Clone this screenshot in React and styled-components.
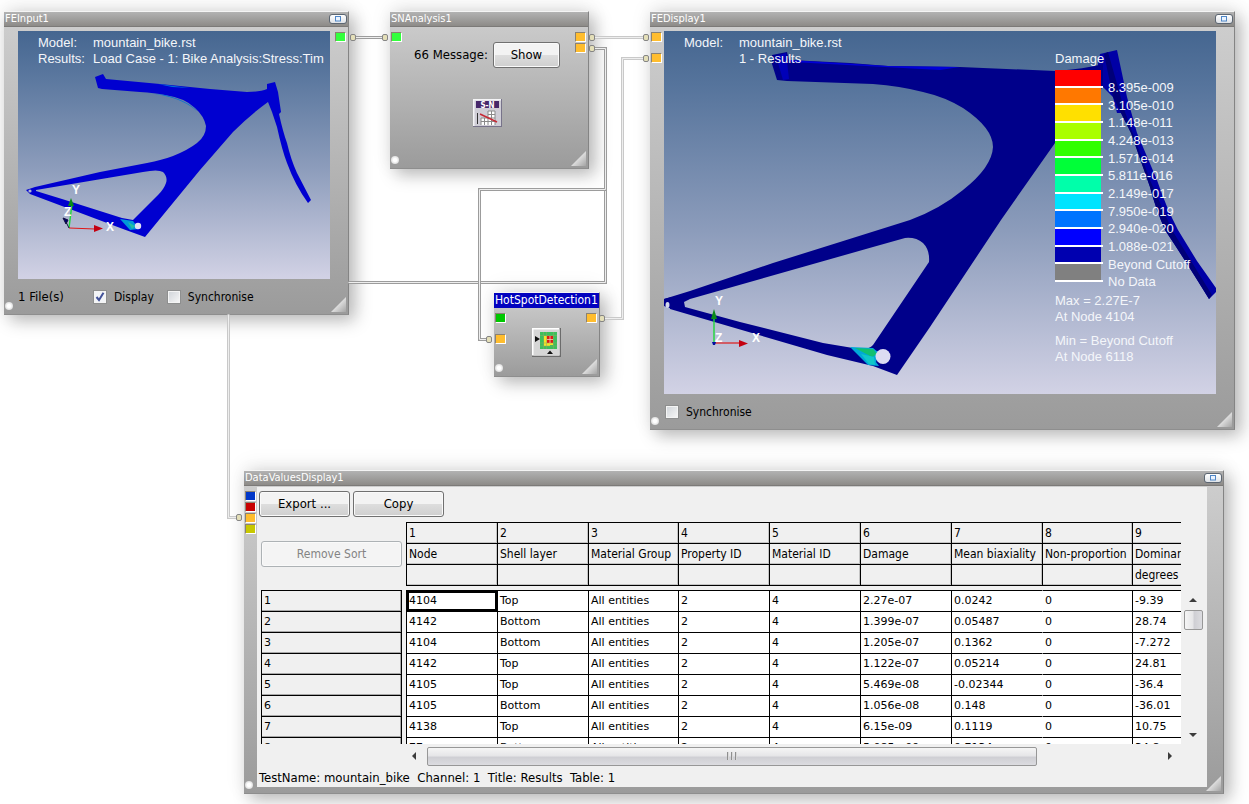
import styled, { createGlobalStyle } from "styled-components"

const GlobalStyle = createGlobalStyle`
  * { box-sizing: border-box; }
  body {
    margin: 0;
    background: #fff;
    color: #000;
    font-family: "DejaVu Sans Condensed", "DejaVu Sans", sans-serif;
    font-size: 13px;
    line-height: 16px;
  }
`

const Canvas = styled.main`
  position: relative;
  min-height: 100vh;
  overflow: hidden;
`

const Wires = styled.svg`
  position: absolute;
  left: 0;
  top: 0;
  overflow: visible;
`

const Node = styled.section`
  position: absolute;
  left: ${p => p.$x}px;
  top: ${p => p.$y}px;
  width: ${p => p.$w}px;
  display: flex;
  flex-direction: column;
  background: linear-gradient(#cfcfcf, #9b9b9b);
  border-top: 1px solid #f4f4f4;
  border-right: 1px solid #848484;
  border-bottom: 1px solid #8e8e8e;
  box-shadow: 6px 6px 16px rgba(0, 0, 0, 0.26), 0 -4px 20px rgba(0, 0, 0, 0.08);
`

const TitleBar = styled.header`
  display: flex;
  align-items: center;
  justify-content: space-between;
  height: 15px;
  padding: 0 1px;
  overflow: hidden;
  white-space: nowrap;
  color: #fff;
  background: ${p => p.$selected ? "#0202bf" : "linear-gradient(#b2b2b2, #8d8b88)"};
  border-bottom: 1px solid ${p => p.$selected ? "#0202bf" : "#7c7a78"};
  h2 {
    margin: 0;
    font-size: ${p => p.$selected ? 12 : 11}px;
    line-height: 14px;
    font-weight: normal;
  }
`

const RestoreButton = styled.button`
  display: flex;
  align-items: center;
  justify-content: center;
  flex: none;
  width: 18px;
  height: 10px;
  padding: 0;
  border: 1px solid #5c6672;
  border-radius: 3px;
  background: linear-gradient(#fff, #dfe3e8);
`

const Body = styled.div`
  display: grid;
  grid-template-columns: ${p => p.$cols};
  flex: 1;
`

const Ports = styled.div`
  display: flex;
  flex-direction: column;
  align-items: ${p => p.$right ? "flex-end" : "flex-start"};
  gap: ${p => p.$gap || 0}px;
  padding: 5px ${p => p.$right ? 2 : 0}px 0 1px;
`

const Port = styled.i`
  width: 11px;
  height: 10px;
  background: ${p => p.$color};
  border: 1px solid #fff;
  border-top-color: #8b8272;
  border-left-color: #8b8272;
`

const Dot = styled.i`
  position: absolute;
  left: 1px;
  bottom: 4px;
  width: 8px;
  height: 8px;
  border-radius: 50%;
  background: radial-gradient(#fff 30%, #c4c4c4);
`

const Grip = styled.i`
  position: absolute;
  right: 2px;
  bottom: 2px;
  width: 15px;
  height: 15px;
  clip-path: polygon(100% 0, 100% 100%, 0 100%);
  background: linear-gradient(135deg, #dedede 50%, #a4a4a4);
`

const Button = styled.button`
  width: ${p => p.$w}px;
  height: 26px;
  padding: 0;
  font: inherit;
  color: #000;
  border: 1px solid #707070;
  border-radius: 3px;
  background: linear-gradient(#f3f3f3 48%, #dddddd 52%, #cfcfcf);
  box-shadow: inset 0 0 0 1px #fafafa;
  &:disabled {
    color: #838383;
    border-color: #adb2b5;
    background: #f4f4f4;
  }
`

const CheckLabel = styled.label`
  display: flex;
  align-items: center;
  gap: 7px;
  font-size: 12px;
  input {
    appearance: none;
    width: 14px;
    height: 14px;
    margin: 0;
    border: 1px solid #8e8f8f;
    outline: 1px solid #f4f4f4;
    outline-offset: -2px;
    background: linear-gradient(135deg, #cfd3d8, #f8f8f8);
  }
  input:checked {
    background: url("data:image/svg+xml,%3Csvg xmlns='http://www.w3.org/2000/svg' viewBox='0 0 12 12'%3E%3Cpath d='M2.5 6 L5 9 L9.5 1.8' fill='none' stroke='%23425299' stroke-width='2'/%3E%3C/svg%3E"), #f2f4f7;
  }
`

const Footer = styled.div`
  display: flex;
  align-items: center;
  height: 35px;
  padding-left: ${p => p.$indent || 0}px;
  > span { width: 75px; }
  label + label { margin-left: 13px; }
`

const Viewport = styled.div`
  position: relative;
  height: ${p => p.$h}px;
  margin-top: 4px;
  overflow: hidden;
  color: #f4f6fa;
  font-family: "Liberation Sans", sans-serif;
  font-size: 13px;
  background: linear-gradient(#456690, #56749c 15%, #8c9cbb 55%, #d2d2e5);
  > svg {
    position: absolute;
    inset: 0;
    width: 100%;
    height: 100%;
  }
`

const Caption = styled.dl`
  position: relative;
  display: grid;
  grid-template-columns: 55px 1fr;
  margin: 0;
  padding: 4px 0 0 20px;
  white-space: nowrap;
  dt, dd { margin: 0; height: 16px; }
`

const Legend = styled.div`
  position: absolute;
  right: 0;
  top: 20px;
  width: 161px;
  > div { display: flex; height: 212px; margin-top: 3px; }
  p { margin: 0; }
  div + p { margin-top: 11px; }
  p + p { margin-top: 8px; }
`

const Swatches = styled.div`
  display: flex;
  flex-direction: column;
  width: 48px;
  i {
    flex: 1;
    border-bottom: 2px solid #fff;
  }
`

const Swatch = styled.i`
  background: linear-gradient(90deg, ${p => p.$color} 46px, transparent 46px);
`

const Labels = styled.div`
  display: flex;
  flex-direction: column;
  margin-left: 5px;
  padding-top: 10px;
  height: 222px;
  span { flex: 1; }
`

const AnalysisPane = styled.div`
  display: flex;
  flex-direction: column;
  align-items: center;
  padding-top: 15px;
  gap: 31px;
  height: 141px;
  p { display: flex; align-items: center; gap: 5px; margin: 0; white-space: nowrap; }
`

const HotPane = styled.div`
  display: flex;
  justify-content: center;
  align-items: flex-start;
  height: 68px;
  padding-top: 20px;
`

const DataPane = styled.div`
  height: 300px;
  margin: 1px 0 6px;
  padding: 4px 0 0 2px;
  background: #f0f0f0;
  min-width: 0;
`

const Toolbar = styled.div`
  display: flex;
  gap: 3px;
`

const GridArea = styled.div`
  display: grid;
  grid-template-columns: 1fr 26px;
  margin: 5px 0 0 2px;
`

const TableClip = styled.div`
  height: 222px;
  overflow: hidden;
`

// cells draw their top and left edges, the next cell closes them
const Table = styled.table`
  width: 960px;
  table-layout: fixed;
  border-collapse: separate;
  border-spacing: 0;
  font-size: 12px;
  th, td {
    height: 21px;
    padding: 0 2px;
    text-align: left;
    font-weight: normal;
    white-space: nowrap;
    line-height: 16px;
    border-top: 1px solid #000;
    border-left: 1px solid #000;
  }
  thead th { box-shadow: inset -1px -1px 0 #c4c4c4; }
  thead tr:last-child th { height: 22px; border-bottom: 1px solid #000; }
  thead th[rowspan] {
    border: none;
    box-shadow: none;
    padding: 0;
  }
  tbody { font-family: "DejaVu Sans", sans-serif; font-size: 11px; }
  tbody td { background: #fff; }
  tbody td:nth-child(9) { border-left-color: #fff; }
  tbody tr:nth-child(2) td:nth-child(2) { box-shadow: inset 0 0 0 2px #000; }
`

const SpacerRow = styled.tr`
  && td {
    height: 4px;
    padding: 0;
    border: none;
    background: #f0f0f0;
  }
`

const RowHead = styled.th`
  && { padding: 0 4px 0 0; border: none; }
  span {
    display: block;
    height: 21px;
    padding: 2px 2px 0;
    border: 1px solid #000;
    border-bottom: none;
    box-shadow: inset -1px -1px 0 #a8a8a8;
  }
`

const VScroll = styled.div`
  display: flex;
  flex-direction: column;
  align-items: center;
  gap: 5px;
  width: 20px;
  height: 145px;
  margin: 73px 0 0 2px;
  svg:last-child { margin-top: auto; }
`

const Thumb = styled.i`
  display: flex;
  align-items: center;
  justify-content: center;
  gap: 2px;
  width: ${p => p.$w}px;
  height: ${p => p.$h}px;
  border: 1px solid #979797;
  border-radius: 2px;
  background: linear-gradient(${p => p.$dir}, #f5f5f5, #e6e6e8 45%, #cfcfd4 55%, #dcdce0);
  b { width: 2px; height: 8px; background: linear-gradient(90deg, #6a6a6a, #fff); }
`

const HScroll = styled.div`
  display: flex;
  align-items: center;
  gap: 8px;
  height: 20px;
  margin: 2px 32px 0 150px;
  svg:last-child { margin-left: auto; }
`

const Status = styled.p`
  margin: 4px 0 0;
  white-space: pre;
`

const ORANGE = "#ffbd2e"
const GREEN = "#33ff3d"
const PALE = "#c9c9c9"
const DARK = "#9c9c9c"

const wires = [
  ["M353 37H385", DARK],
  ["M605 48V189V282H348", DARK],
  ["M593 48H605V189H479V339H489", DARK],
  ["M593 37H645", PALE],
  ["M602 318H622V58H645", PALE],
  ["M228 314V517H239", PALE],
]
const plugs = [[353, 37], [385, 37], [592, 37], [592, 48], [646, 37], [646, 58], [489, 339], [602, 318], [239, 517]]

const legend = [
  ["#ff0000", "8.395e-009"],
  ["#ff7800", "3.105e-010"],
  ["#ffe000", "1.148e-011"],
  ["#aaff00", "4.248e-013"],
  ["#30ff00", "1.571e-014"],
  ["#00ff38", "5.811e-016"],
  ["#00ffaa", "2.149e-017"],
  ["#00e4ff", "7.950e-019"],
  ["#0074ff", "2.940e-020"],
  ["#0000ff", "1.088e-021"],
  ["#0000b0", "Beyond Cutoff"],
  ["#808080", "No Data"],
]

const columns = [
  ["Node", ""],
  ["Shell layer", ""],
  ["Material Group", ""],
  ["Property ID", ""],
  ["Material ID", ""],
  ["Damage", ""],
  ["Mean biaxiality", ""],
  ["Non-proportion", ""],
  ["Dominant", "degrees"],
]

const rows = [
  ["4104", "Top", "All entities", "2", "4", "2.27e-07", "0.0242", "0", "-9.39"],
  ["4142", "Bottom", "All entities", "2", "4", "1.399e-07", "0.05487", "0", "28.74"],
  ["4104", "Bottom", "All entities", "2", "4", "1.205e-07", "0.1362", "0", "-7.272"],
  ["4142", "Top", "All entities", "2", "4", "1.122e-07", "0.05214", "0", "24.81"],
  ["4105", "Top", "All entities", "2", "4", "5.469e-08", "-0.02344", "0", "-36.4"],
  ["4105", "Bottom", "All entities", "2", "4", "1.056e-08", "0.148", "0", "-36.01"],
  ["4138", "Top", "All entities", "2", "4", "6.15e-09", "0.1119", "0", "10.75"],
  ["77", "Bottom", "All entities", "2", "4", "5.085e-09", "0.7134", "0", "34.8"],
]

function Arrow({ d }) {
  return (
    <svg width="10" height="10" viewBox="0 0 10 10" aria-hidden="true">
      <path d={d} fill="#3c3c3c" />
    </svg>
  )
}

function Title({ children, selected, restore }) {
  return (
    <TitleBar $selected={selected}>
      <h2>{children}</h2>
      {restore && (
        <RestoreButton type="button" aria-label="Restore">
          <svg width="8" height="6" viewBox="0 0 8 6">
            <rect x="1.5" y="0.5" width="5" height="4.5" fill="#eaf3ff" stroke="#4f86c6" />
          </svg>
        </RestoreButton>
      )}
    </TitleBar>
  )
}

function Axes({ x, y, flat }) {
  return (
    <g transform={`translate(${x} ${y})`}>
      <path d={flat ? "M0 0V-28" : "M0 0L3 -24"} stroke="#1fd83a" strokeWidth="1.4" />
      <path d={flat ? "M-3 -24L0 -34L3 -24Z" : "M-1 -22L2 -30L5 -22Z"} fill="#0a8a1a" />
      <path d={flat ? "M0 0H26" : "M0 0L26 1"} stroke="#e01818" strokeWidth="1.2" />
      <path d="M25 -3L34 0.5L25 4Z" fill="#c40010" />
      {flat
        ? <path d="M-2 -1H2L1 2H-1Z" fill="#0010a0" />
        : <path d="M-6 -10L-1 -8L-3 -4ZM0 0L-3 -6" fill="#00006a" stroke="#101040" />}
      <g fill="#fff" fontWeight="bold" fontSize="12">
        <text x={flat ? 1 : 3} y={flat ? -38 : -34}>Y</text>
        <text x={flat ? 1 : -5} y={flat ? -1 : -12}>Z</text>
        <text x={flat ? 38 : 37} y={flat ? -1 : 3}>X</text>
      </g>
    </g>
  )
}

function SmallBike() {
  return (
    <svg viewBox="18 31 312 248" preserveAspectRatio="xMinYMin slice" aria-hidden="true">
      <path
        fillRule="evenodd"
        fill="#0000d0"
        d="M95 77L103 74L106 79L160 84L210 89L247 92Q260 92 267 89L267 84L275 82L278 92L281 112L279 114Q283 132 287 143Q291 160 297 173L311 200L308 203Q295 185 287 163Q282 150 277 127L272 112L268 102Q250 115 233 132L200 170L145 237L123 229L30 194L26 190L35 187L100 172L147 163Q162 160 173 156Q188 150 197 143Q206 136 206 126Q204 116 195 108Q185 98 165 95Q155 93 140 92L102 89L98 88Z
           M36 190L143 172Q158 169 163 172Q168 177 166 183Q164 189 158 195L133 220L122 218L62 199L36 191Z"
      />
      <path d="M147 93Q180 96 197 111Q188 101 165 95ZM158 84L190 88L172 87Z" fill="#0070d8" />
      <path d="M120 219L133 221L139 229L130 230Z" fill="#0098d8" />
      <path d="M128 222L135 226L132 229Z" fill="#20c0a0" />
      <circle cx="138" cy="226" r="3.2" fill="#e0e2f4" />
      <circle cx="30" cy="191" r="1.6" fill="#b0b6d0" />
      <Axes x={69} y={228} />
    </svg>
  )
}

function LargeBike() {
  return (
    <svg viewBox="664 31 552 363" preserveAspectRatio="xMinYMin slice" aria-hidden="true">
      <path
        fill="#0000a6"
        d="M1100 54L1117 50L1127 97L1137 133L1157 180Q1166 207 1178 230L1197 261L1216 288V292L1209 299Q1185 260 1165 230Q1155 207 1150 187L1131 133L1121 113L1117 113L1113 97L1103 87L1098 90V64Z"
      />
      <path d="M1104 54L1108 52L1125 112L1150 180L1172 230L1212 295L1209 299Q1185 260 1165 230Q1155 207 1150 187L1131 133L1121 113L1113 97Z" fill="#000078" />
      <path
        fillRule="evenodd"
        fill="#00008a"
        d="M772 55L787 52L789 60L850 63L888 66L960 67L1055 71Q1085 69 1103 64V87Q1076 112 1055 143L1001 220L930 327L897 375L873 366L827 355L670 309V300L664 301L664 299L690 291L773 263L840 242L910 220Q940 209 963 190Q992 167 993 147Q993 128 963 108Q945 97 923 92Q900 86 873 84L787 81L777 80L772 64Z
           M684 302L690 299L873 247L905 238Q916 237 923 243Q930 250 929 262L873 345Q868 351 853 348L823 343L740 322L685 307Z"
      />
      <path d="M664 299L672 297V309L664 306Z" fill="#00008a" />
      <path d="M789 60L888 66L960 67L940 70L792 62Z" fill="#0000d8" />
      <path d="M776 56L786 53L789 79L783 80Z" fill="#0000b8" />
      <path d="M850 347L873 348L879 353L876 362L879 366L868 365Z" fill="#00a8d8" />
      <path d="M855 348L873 349L877 354L872 357Z" fill="#10c070" />
      <path d="M861 354L874 357L875 365L869 364Z" fill="#10c8c8" />
      <circle cx="883" cy="356.5" r="7.5" fill="#dcdcf2" />
      <ellipse cx="667.5" cy="305" rx="2" ry="3" fill="#d4d8ec" />
      <Axes x={714} y={343} flat />
    </svg>
  )
}

function SNIcon() {
  return (
    <svg width="29" height="28" viewBox="0 0 29 28" role="img" aria-label="S-N">
      <rect width="29" height="28" fill="#77738a" />
      <path d="M0 0H28V27H0Z" fill="#f4f4f6" />
      <path d="M1.5 1.5H28V27H1.5Z" fill="#cfcdd6" />
      <rect x="3" y="2" width="23" height="7" fill="#46276a" />
      <text x="14.5" y="8.5" fill="#fff" fontSize="8" fontWeight="bold" textAnchor="middle">S-N</text>
      <path d="M15 12H22V26H8V19H15Z" fill="#fff" />
      <path d="M15 12V26M18.5 12V26M22 12V26M11.5 19V26M8 19V26M15 12H22M15 15.5H22M8 19H22M8 22.5H22" stroke="#8a8a8a" fill="none" />
      <path d="M4.5 14V25" stroke="#333" />
      <path d="M7 15L24 23" stroke="#c62a36" strokeWidth="1.5" />
    </svg>
  )
}

function HotSpotIcon() {
  return (
    <svg width="29" height="29" viewBox="0 0 29 29" role="img" aria-label="Hot spot detection">
      <rect width="29" height="29" fill="#6c6c6c" />
      <path d="M0 0H27.5V27.5H0Z" fill="#fff" />
      <path d="M1.5 1.5H27.5V27.5H1.5Z" fill="#d6d6d6" />
      <rect x="8" y="4" width="17" height="17" fill="#3cbf5c" />
      <path d="M12 8H21V17H18V18H12Z" fill="#f4e428" />
      <rect x="15" y="8" width="6" height="7" fill="#dc1a14" />
      <path d="M11.5 4V21M14.5 4V21M21.5 4V21M8 7.500H25M8 15H25M8 18H25" stroke="#8fa860" strokeWidth="0.5" />
      <path d="M18 8V15M15 11.5H21" stroke="#f0d0c0" strokeWidth="0.8" />
      <path d="M3 8L8 11L3 14ZM15 26L18 22.5L21 26Z" fill="#111" />
    </svg>
  )
}

function App() {
  return (
    <>
      <GlobalStyle />
      <Canvas>
        <Node $x={4} $y={11} $w={345}>
          <Title restore>FEInput1</Title>
          <Body $cols="14px 1fr 18px">
            <div />
            <div>
              <Viewport $h={248}>
                <SmallBike />
                <Caption>
                  <dt>Model:</dt>
                  <dd>mountain_bike.rst</dd>
                  <dt>Results:</dt>
                  <dd>Load Case - 1: Bike Analysis:Stress:Tim</dd>
                </Caption>
              </Viewport>
              <Footer>
                <span>1 File(s)</span>
                <CheckLabel><input type="checkbox" defaultChecked />Display</CheckLabel>
                <CheckLabel><input type="checkbox" />Synchronise</CheckLabel>
              </Footer>
            </div>
            <Ports $right><Port $color={GREEN} /></Ports>
          </Body>
          <Dot />
          <Grip />
        </Node>

        <Node $x={390} $y={11} $w={199}>
          <Title>SNAnalysis1</Title>
          <Body $cols="14px 1fr 18px">
            <Ports><Port $color={GREEN} /></Ports>
            <AnalysisPane>
              <p>66 Message: <Button type="button" $w={67}>Show</Button></p>
              <SNIcon />
            </AnalysisPane>
            <Ports $right $gap={1}>
              <Port $color={ORANGE} />
              <Port $color={ORANGE} />
            </Ports>
          </Body>
          <Dot />
          <Grip />
        </Node>

        <Node $x={494} $y={292} $w={106}>
          <Title selected>HotSpotDetection1</Title>
          <Body $cols="14px 1fr 14px">
            <Ports $gap={11}>
              <Port $color="#00c800" />
              <Port $color={ORANGE} />
            </Ports>
            <HotPane><HotSpotIcon /></HotPane>
            <Ports $right><Port $color={ORANGE} /></Ports>
          </Body>
          <Dot />
          <Grip />
        </Node>

        <Node $x={650} $y={11} $w={585}>
          <Title restore>FEDisplay1</Title>
          <Body $cols="14px 1fr 18px">
            <Ports $gap={11}>
              <Port $color={ORANGE} />
              <Port $color={ORANGE} />
            </Ports>
            <div>
              <Viewport $h={363}>
                <LargeBike />
                <Caption>
                  <dt>Model:</dt>
                  <dd>mountain_bike.rst</dd>
                  <dt />
                  <dd>1 - Results</dd>
                </Caption>
                <Legend>
                  <p>Damage</p>
                  <div>
                    <Swatches>
                      {legend.map(([color]) => <Swatch key={color} $color={color} />)}
                    </Swatches>
                    <Labels>
                      {legend.map(([color, label]) => <span key={color}>{label}</span>)}
                    </Labels>
                  </div>
                  <p>Max = 2.27E-7<br />At Node 4104</p>
                  <p>Min = Beyond Cutoff<br />At Node 6118</p>
                </Legend>
              </Viewport>
              <Footer $indent={1}>
                <CheckLabel><input type="checkbox" />Synchronise</CheckLabel>
              </Footer>
            </div>
            <div />
          </Body>
          <Dot />
          <Grip />
        </Node>

        <Node $x={244} $y={470} $w={980}>
          <Title restore>DataValuesDisplay1</Title>
          <Body $cols="13px 1fr 16px">
            <Ports $gap={1}>
              <Port $color="#0036c8" />
              <Port $color="#c80000" />
              <Port $color={ORANGE} />
              <Port $color="#c8c800" />
            </Ports>
            <DataPane>
              <Toolbar>
                <Button type="button" $w={91}>Export ...</Button>
                <Button type="button" $w={91}>Copy</Button>
              </Toolbar>
              <GridArea>
                <TableClip>
                  <Table>
                    <colgroup>
                      <col width="145" />
                      {columns.map(([name], i) => <col key={name} width={i === 2 || i === 7 ? 90 : 91} />)}
                    </colgroup>
                    <thead>
                      <tr>
                        <th rowSpan={3}><Button type="button" $w={141} disabled>Remove Sort</Button></th>
                        {columns.map(([name], i) => <th key={name}>{i + 1}</th>)}
                      </tr>
                      <tr>{columns.map(([name]) => <th key={name}>{name}</th>)}</tr>
                      <tr>{columns.map(([name, unit]) => <th key={name}>{unit}</th>)}</tr>
                    </thead>
                    <tbody>
                      <SpacerRow><td colSpan={10} /></SpacerRow>
                      {rows.map((row, r) => (
                        <tr key={r}>
                          <RowHead scope="row"><span>{r + 1}</span></RowHead>
                          {row.map((cell, c) => <td key={c}>{cell}</td>)}
                        </tr>
                      ))}
                    </tbody>
                  </Table>
                </TableClip>
                <VScroll>
                  <Arrow d="M1 7L5 3L9 7Z" />
                  <Thumb $w={19} $h={20} $dir="90deg" />
                  <Arrow d="M1 3L5 7L9 3Z" />
                </VScroll>
              </GridArea>
              <HScroll>
                <Arrow d="M7 1L3 5L7 9Z" />
                <Thumb $w={610} $h={19} $dir="180deg"><b /><b /><b /></Thumb>
                <Arrow d="M3 1L7 5L3 9Z" />
              </HScroll>
              <Status>TestName: mountain_bike  Channel: 1  Title: Results  Table: 1</Status>
            </DataPane>
            <div />
          </Body>
          <Dot />
          <Grip />
        </Node>

        <Wires width="100%" height="100%" aria-hidden="true">
          <g fill="none" transform="translate(0.5 0.5)">
            {wires.map(([d, color]) => (
              <g key={d}>
                <path d={d} stroke={color} strokeWidth="3" />
                <path d={d} stroke="#eeeeee" strokeWidth="1" />
              </g>
            ))}
          </g>
          {plugs.map(([x, y]) => (
            <rect key={`${x}-${y}`} x={x - 2.5} y={y - 2.5} width="5" height="6" rx="1.5" fill="#e4dfb8" stroke="#858585" />
          ))}
        </Wires>
      </Canvas>
    </>
  )
}

export default App
